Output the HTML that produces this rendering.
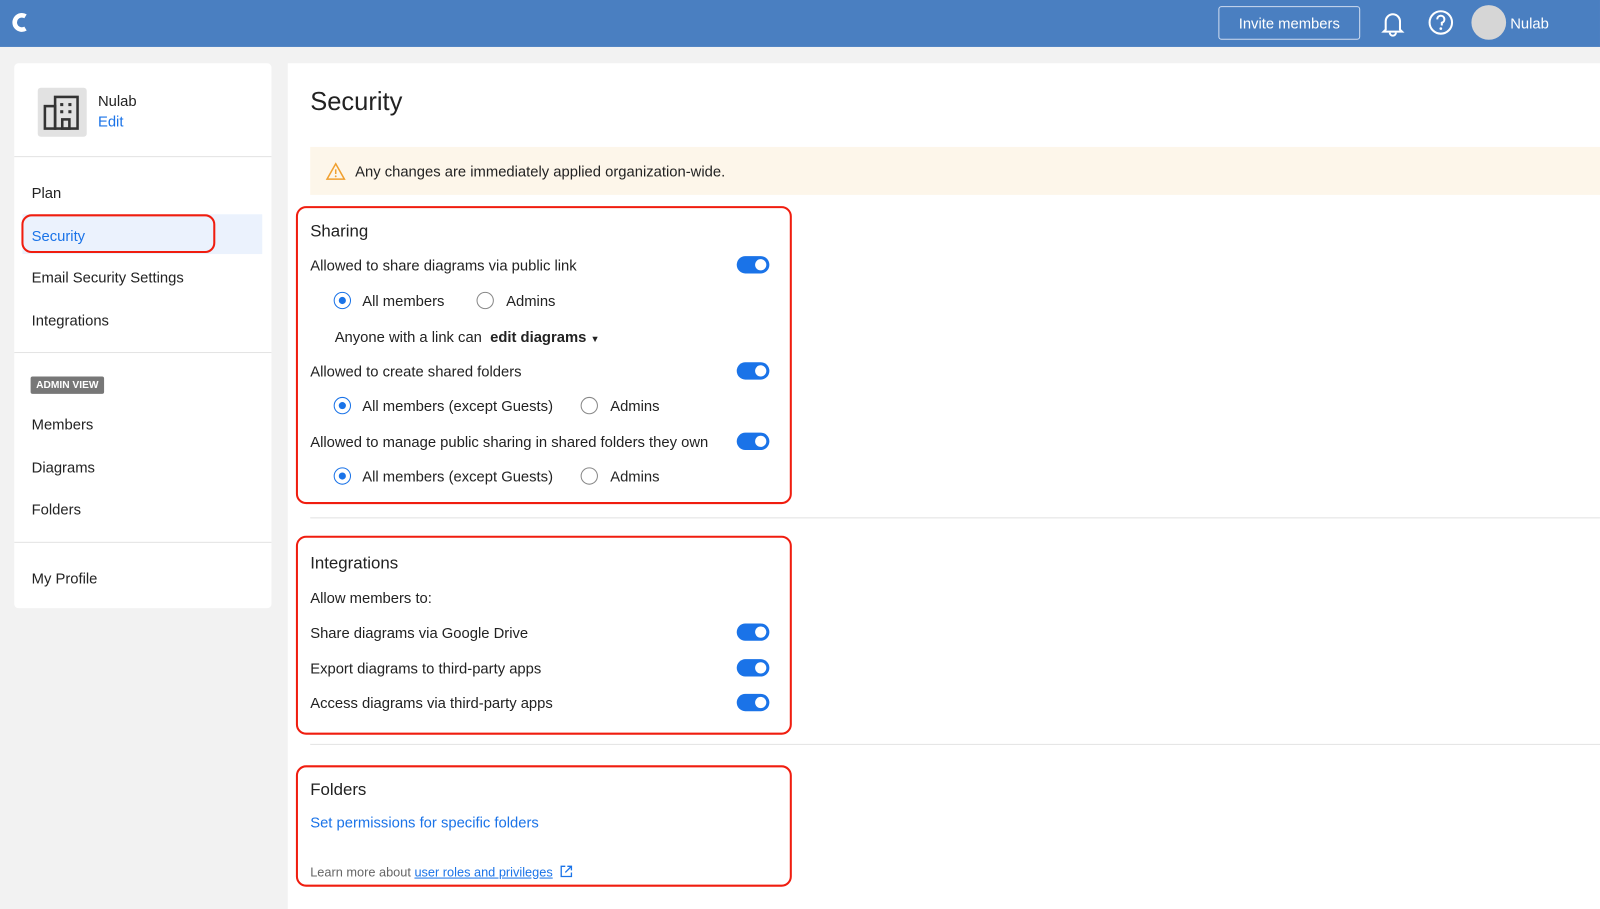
<!DOCTYPE html>
<html><head><style>
*{margin:0;padding:0;box-sizing:border-box}
html,body{width:1600px;height:891px;overflow:hidden;background:#f2f2f2}
#w{position:absolute;left:0;top:0;width:1568px;height:873px;transform:scale(1.0204);transform-origin:0 0;font-family:"Liberation Sans",sans-serif;color:#222;font-size:14.5px;line-height:1.36}
.a{position:absolute;white-space:nowrap}
div.a,.nav{margin-top:2.5px}
div.nt{margin-top:0}
.top{position:absolute;left:0;top:0;width:1568px;height:46px;background:#4a7fc1}
.side{position:absolute;left:14px;top:62px;width:252px;height:534px;background:#fff;border-radius:4px}
.main{position:absolute;left:282px;top:62px;width:1300px;height:829px;background:#fff}
.hr{position:absolute;height:1px;background:#e3e3e3}
.tog{position:absolute;width:32px;height:17px;border-radius:9px;background:#1a73e8}
.tog::after{content:"";position:absolute;right:3px;top:3px;width:11px;height:11px;border-radius:50%;background:#fff}
.rad{position:absolute;width:17px;height:17px;border-radius:50%;border:1px solid #888;background:#fff}
.rad.on{border-color:#1a73e8}
.rad.on::after{content:"";position:absolute;left:4px;top:4px;width:7px;height:7px;border-radius:50%;background:#1a73e8}
.box{position:absolute;border:2.5px solid #f01d0f;border-radius:10px}
.nav{position:absolute;left:31px;color:#222}
</style></head><body><div id="w">
<div class="top"></div>
<svg class="a" style="left:10px;top:12px" width="18" height="20" viewBox="0 0 18 20"><path d="M15 4 A7 7 0 1 0 15 16" fill="none" stroke="#fff" stroke-width="4.5"/></svg>
<div class="a nt" style="left:1194px;top:6px;width:139px;height:33px;border:1px solid #cfdcf0;border-radius:3px;color:#fff;text-align:center;line-height:34px">Invite members</div>
<svg class="a" style="left:1353px;top:10px" width="24" height="26" viewBox="0 0 24 26"><path d="M5 19 V11 a7 7 0 0 1 14 0 V19 l2 2 H3 z" fill="none" stroke="#fff" stroke-width="2"/><path d="M9 22 a3 3 0 0 0 6 0" fill="none" stroke="#fff" stroke-width="2"/></svg>
<svg class="a" style="left:1399px;top:9px" width="26" height="26" viewBox="0 0 26 26"><circle cx="13" cy="13" r="11" fill="none" stroke="#fff" stroke-width="2"/><path d="M9.5 10 a3.5 3.5 0 1 1 4.5 3.3 V16" fill="none" stroke="#fff" stroke-width="2"/><circle cx="13" cy="19" r="1.3" fill="#fff"/></svg>
<div class="a nt" style="left:1442px;top:5px;width:34px;height:34px;border-radius:50%;background:#d6d6d6"></div>
<div class="a" style="left:1480px;top:12px;color:#fff">Nulab</div>

<div class="side"></div>
<div class="a nt" style="left:37px;top:86px;width:48px;height:48px;background:#e2e2e2;border-radius:3px"></div>
<svg class="a" style="left:42px;top:91px" width="38" height="38" viewBox="0 0 38 38"><rect x="2" y="13" width="10" height="22" fill="none" stroke="#333" stroke-width="2.5"/><rect x="12" y="4" width="22" height="31" fill="none" stroke="#333" stroke-width="2.5"/><rect x="17" y="10" width="3" height="3" fill="#333"/><rect x="25" y="10" width="3" height="3" fill="#333"/><rect x="17" y="17" width="3" height="3" fill="#333"/><rect x="25" y="17" width="3" height="3" fill="#333"/><rect x="19" y="26" width="7" height="9" fill="none" stroke="#333" stroke-width="2.5"/></svg>
<div class="a" style="left:96px;top:88px">Nulab</div>
<div class="a" style="left:96px;top:108px;color:#1a73e8">Edit</div>
<div class="hr" style="left:14px;top:153px;width:252px"></div>
<div class="nav" style="top:178px">Plan</div>
<div class="a nt" style="left:22px;top:210px;width:235px;height:39px;background:#ebf2fd"></div>
<div class="nav" style="top:220px;color:#1a73e8">Security</div>
<div class="box" style="left:21px;top:210px;width:190px;height:38px"></div>
<div class="nav" style="top:261px">Email Security Settings</div>
<div class="nav" style="top:303px">Integrations</div>
<div class="hr" style="left:14px;top:345px;width:252px"></div>
<div class="a nt" style="left:30px;top:369px;width:72px;height:17px;background:#777;border-radius:2px;color:#fff;font-size:10px;line-height:17px;text-align:center;font-weight:bold">ADMIN VIEW</div>
<div class="nav" style="top:405px">Members</div>
<div class="nav" style="top:447px">Diagrams</div>
<div class="nav" style="top:488px">Folders</div>
<div class="hr" style="left:14px;top:531px;width:252px"></div>
<div class="nav" style="top:556px">My Profile</div>

<div class="main"></div>
<div class="a" style="left:304px;top:80px;font-size:25px;color:#222">Security</div>
<div class="a nt" style="left:304px;top:144px;width:1264px;height:47px;background:#fdf6ea"></div>
<svg class="a" style="left:319px;top:159px" width="20" height="18" viewBox="0 0 20 18"><path d="M10 1.5 L18.5 16.5 H1.5 Z" fill="none" stroke="#f0a030" stroke-width="1.5"/><path d="M10 7 V11.5" stroke="#f0a030" stroke-width="1.5"/><circle cx="10" cy="13.8" r="0.9" fill="#f0a030"/></svg>
<div class="a" style="left:348px;top:157px">Any changes are immediately applied organization-wide.</div>

<div class="a" style="left:304px;top:213px;font-size:16.5px">Sharing</div>
<div class="a" style="left:304px;top:249px">Allowed to share diagrams via public link</div><div class="tog" style="left:722px;top:251px"></div>
<div class="rad on" style="left:327px;top:286px"></div><div class="a" style="left:355px;top:284px">All members</div>
<div class="rad" style="left:467px;top:286px"></div><div class="a" style="left:496px;top:284px">Admins</div>
<div class="a" style="left:328px;top:319px">Anyone with a link can <b>&nbsp;edit diagrams</b> <span style="font-size:9px">▼</span></div>
<div class="a" style="left:304px;top:353px">Allowed to create shared folders</div><div class="tog" style="left:722px;top:355px"></div>
<div class="rad on" style="left:327px;top:389px"></div><div class="a" style="left:355px;top:387px">All members (except Guests)</div>
<div class="rad" style="left:569px;top:389px"></div><div class="a" style="left:598px;top:387px">Admins</div>
<div class="a" style="left:304px;top:422px">Allowed to manage public sharing in shared folders they own</div><div class="tog" style="left:722px;top:424px"></div>
<div class="rad on" style="left:327px;top:458px"></div><div class="a" style="left:355px;top:456px">All members (except Guests)</div>
<div class="rad" style="left:569px;top:458px"></div><div class="a" style="left:598px;top:456px">Admins</div>
<div class="box" style="left:290px;top:202px;width:486px;height:292px"></div>
<div class="hr" style="left:304px;top:507px;width:1264px"></div>

<div class="a" style="left:304px;top:538px;font-size:16.5px">Integrations</div>
<div class="a" style="left:304px;top:575px">Allow members to:</div>
<div class="a" style="left:304px;top:609px">Share diagrams via Google Drive</div><div class="tog" style="left:722px;top:611px"></div>
<div class="a" style="left:304px;top:644px">Export diagrams to third-party apps</div><div class="tog" style="left:722px;top:646px"></div>
<div class="a" style="left:304px;top:678px">Access diagrams via third-party apps</div><div class="tog" style="left:722px;top:680px"></div>
<div class="box" style="left:290px;top:525px;width:486px;height:195px"></div>
<div class="hr" style="left:304px;top:729px;width:1264px"></div>

<div class="a" style="left:304px;top:760px;font-size:16.5px">Folders</div>
<div class="a" style="left:304px;top:795px;color:#1a73e8">Set permissions for specific folders</div>
<div class="a" style="left:304px;top:844px;font-size:12.5px;color:#666">Learn more about <span style="color:#1a73e8;text-decoration:underline">user roles and privileges </span></div>
<svg class="a" style="left:548px;top:847px" width="14" height="14" viewBox="0 0 14 14"><path d="M6 2 H2 V12 H12 V8 M8 2 H12 V6 M12 2 L6 8" fill="none" stroke="#1a73e8" stroke-width="1.3"/></svg>
<div class="box" style="left:290px;top:750px;width:486px;height:119px"></div>
</div></body></html>
